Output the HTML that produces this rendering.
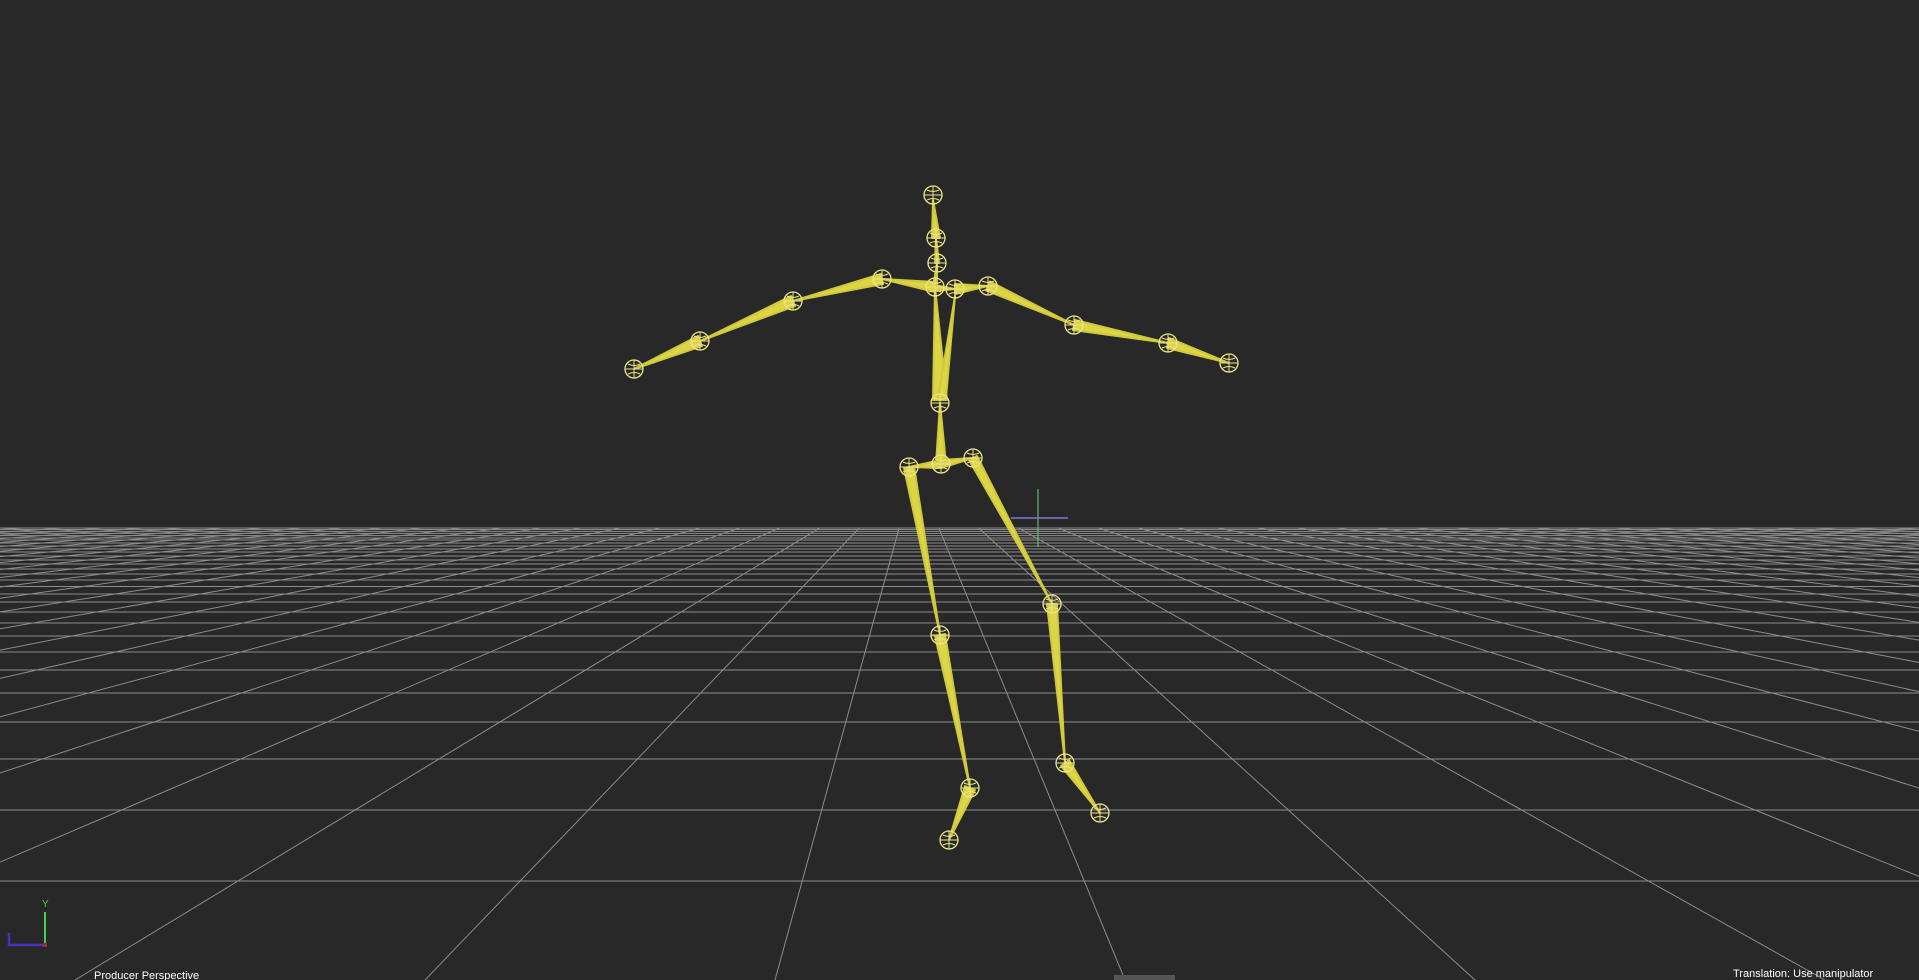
<!DOCTYPE html>
<html><head><meta charset="utf-8"><style>
html,body{margin:0;padding:0;background:#282828;width:1919px;height:980px;overflow:hidden}
svg{display:block}
.t{font-family:"Liberation Sans",sans-serif;font-size:11px;fill:#fff}
</style></head><body>
<svg width="1919" height="980" viewBox="0 0 1919 980">
<defs>
<clipPath id="gc"><rect x="0" y="528" width="1919" height="452"/></clipPath>
<g id="j"><circle r="9" fill="none" stroke="#ece58a" stroke-width="1.3"/><path d="M-9 0H9M0-9V9M-6-5Q0 -2 6-5M-6 5Q0 2 6 5" stroke="#ece58a" stroke-width="1" fill="none"/></g>
</defs>
<rect width="1919" height="980" fill="#282828"/>
<g stroke="#8c8c8c" stroke-width="1" fill="none">
<path d="M0 881H1919M0 810H1919M0 759H1919M0 722H1919M0 693H1919M0 670H1919M0 652H1919M0 636H1919M0 623H1919M0 612H1919M0 602H1919M0 594H1919M0 586.5H1919M0 580H1919M0 574H1919M0 569H1919M0 564H1919M0 560H1919M0 556H1919M0 552H1919M0 549H1919M0 546H1919M0 543H1919M0 540H1919M0 538H1919M0 535.6H1919M0 533.4H1919M0 531.4H1919M0 529.5H1919M0 528H1919"/>
<g clip-path="url(#gc)">
<path d="M915 470L-7975 980M915 470L-7625 980M915 470L-7275 980M915 470L-6925 980M915 470L-6575 980M915 470L-6225 980M915 470L-5875 980M915 470L-5525 980M915 470L-5175 980M915 470L-4825 980M915 470L-4475 980M915 470L-4125 980M915 470L-3775 980M915 470L-3425 980M915 470L-3075 980M915 470L-2725 980M915 470L-2375 980M915 470L-2025 980M915 470L-1675 980M915 470L-1325 980M915 470L-975 980M915 470L-625 980M915 470L-275 980M915 470L75 980M915 470L425 980M915 470L775 980M915 470L1125 980M915 470L1475 980M915 470L1825 980M915 470L2175 980M915 470L2525 980M915 470L2875 980M915 470L3225 980M915 470L3575 980M915 470L3925 980M915 470L4275 980M915 470L4625 980M915 470L4975 980M915 470L5325 980M915 470L5675 980M915 470L6025 980M915 470L6375 980M915 470L6725 980M915 470L7075 980M915 470L7425 980M915 470L7775 980M915 470L8125 980M915 470L8475 980M915 470L8825 980M915 470L9175 980M915 470L9525 980"/>
</g>
</g>
<line x1="1038" y1="489" x2="1038" y2="547" stroke="#6fd07a" stroke-width="1"/>
<line x1="1011" y1="518" x2="1068" y2="518" stroke="#7a7ad0" stroke-width="1.5"/>
<g fill="#dcd545" stroke="#d0c93c" stroke-width="2" stroke-linejoin="round">
<polygon points="932,238 940,238 933,200"/>
<polygon points="935,263 939,263 936,238"/>
<polygon points="933,287 937,287 937,263"/>
<polygon points="935,282 935,292 882,279"/>
<polygon points="881,274 883,284 793,301"/>
<polygon points="791,296 795,306 700,341"/>
<polygon points="698,336 702,346 634,369"/>
<polygon points="935,285 935,291 955,289"/>
<polygon points="955,284 955,294 988,286"/>
<polygon points="990,281.5 986,290.5 1074,325"/>
<polygon points="1075,320 1073,330 1168,343"/>
<polygon points="1169,338 1167,348 1229,363"/>
<polygon points="933,400 947,400 935,287"/>
<polygon points="938,398 946,398 955,296"/>
<polygon points="936,464 946,464 940,403"/>
<polygon points="941,460 941,468 909,467"/>
<polygon points="941,460 941,468 973,458"/>
<polygon points="904,468 914,466 940,635"/>
<polygon points="935,636 945,634 970,788"/>
<polygon points="965,786 975,790 949,840"/>
<polygon points="969,460 977,456 1052,604"/>
<polygon points="1047,604 1057,604 1065,763"/>
<polygon points="1061,766 1069,760 1100,813"/>
</g>
<g>
<use href="#j" x="933" y="195"/><use href="#j" x="936" y="238"/><use href="#j" x="937" y="263"/><use href="#j" x="935" y="287"/><use href="#j" x="955" y="289"/>
<use href="#j" x="882" y="279"/><use href="#j" x="793" y="301"/><use href="#j" x="700" y="341"/><use href="#j" x="634" y="369"/>
<use href="#j" x="988" y="286"/><use href="#j" x="1074" y="325"/><use href="#j" x="1168" y="343"/><use href="#j" x="1229" y="363"/>
<use href="#j" x="940" y="403"/><use href="#j" x="941" y="464"/><use href="#j" x="909" y="467"/><use href="#j" x="973" y="458"/>
<use href="#j" x="940" y="635"/><use href="#j" x="970" y="788"/><use href="#j" x="949" y="840"/>
<use href="#j" x="1052" y="604"/><use href="#j" x="1065" y="763"/><use href="#j" x="1100" y="813"/>
</g>
<line x1="45" y1="912" x2="45" y2="945" stroke="#3fd24a" stroke-width="2"/>
<path d="M9 933V945H45" stroke="#4b2fc0" stroke-width="2.5" fill="none"/>
<rect x="43" y="943" width="4" height="4" fill="#a03030"/>
<text x="42" y="907" style="font-family:'Liberation Sans',sans-serif;font-size:10px;fill:#3fd24a">Y</text>
<text class="t" x="94" y="979">Producer Perspective</text>
<text class="t" x="1733" y="977">Translation: Use manipulator</text>
<rect x="1114" y="975" width="61" height="5" fill="#555"/>
</svg>
</body></html>
